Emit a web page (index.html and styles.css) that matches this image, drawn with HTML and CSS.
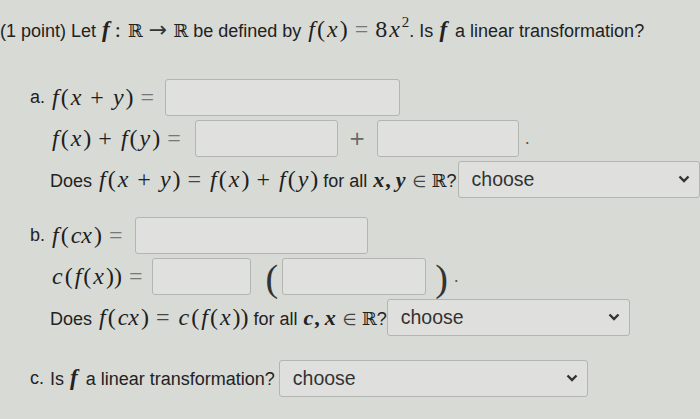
FILE: index.html
```html
<!DOCTYPE html>
<html>
<head>
<meta charset="utf-8">
<link rel="stylesheet" href="styles.css">
</head>
<body>
<div class="page">
  <div class="title">(1 point) Let <span class="fb">f</span><span class="colon">:</span><span class="bb">ℝ</span><span class="arrow">→</span><span class="bb">ℝ</span> be defined by <span class="math"><span class="v">f</span>(<span class="v">x</span>)<span class="rel">=</span>8<span class="v">x</span><sup class="sup">2</sup></span>. Is <span class="fb">f</span> a linear transformation?</div>

  <div class="row r-a1">
    <span class="lbl">a.</span>
    <span class="math"><span class="v">f</span>(<span class="v">x</span><span class="bin">+</span><span class="v">y</span>)<span class="rel">=</span></span>
    <span class="box w-a1"></span>
  </div>
  <div class="row r-a2">
    <span class="math"><span class="v">f</span>(<span class="v">x</span>)<span class="bin">+</span><span class="v">f</span>(<span class="v">y</span>)<span class="rel">=</span></span>
    <span class="box w-a2a"></span>
    <span class="plus">+</span>
    <span class="box w-a2b"></span>
    <span class="dot">.</span>
  </div>
  <div class="row r-a3">
    <span class="txt">Does <span class="math"><span class="v">f</span>(<span class="v">x</span><span class="bin">+</span><span class="v">y</span>)<span class="rel dk">=</span><span class="v">f</span>(<span class="v">x</span>)<span class="bin">+</span><span class="v">f</span>(<span class="v">y</span>)</span> for all <span class="sm"><span class="v">x</span>,<span class="v sp">y</span></span><span class="in">∈</span><span class="bb">ℝ</span>?</span>
    <span class="sel w-s1"><span class="choose">choose</span><svg class="chev" viewBox="0 0 12 8" width="12" height="8"><path d="M1.5 1.5 L6 6 L10.5 1.5" fill="none" stroke="#333" stroke-width="2.4"/></svg></span>
  </div>

  <div class="row r-b1">
    <span class="lbl">b.</span>
    <span class="math"><span class="v">f</span>(<span class="v">cx</span>)<span class="rel">=</span></span>
    <span class="box w-b1"></span>
  </div>
  <div class="row r-b2">
    <span class="math"><span class="v">c</span>(<span class="v">f</span>(<span class="v">x</span>))<span class="rel">=</span></span>
    <span class="box w-b2a"></span>
    <span class="paren pl">(</span>
    <span class="box w-b2b"></span>
    <span class="paren pr">)</span>
    <span class="dot">.</span>
  </div>
  <div class="row r-b3">
    <span class="txt">Does <span class="math"><span class="v">f</span>(<span class="v">cx</span>)<span class="rel dk">=</span><span class="v">c</span>(<span class="v">f</span>(<span class="v">x</span>))</span> for all <span class="sm"><span class="v">c</span>,<span class="v sp">x</span></span><span class="in">∈</span><span class="bb">ℝ</span>?</span>
    <span class="sel w-s2"><span class="choose">choose</span><svg class="chev" viewBox="0 0 12 8" width="12" height="8"><path d="M1.5 1.5 L6 6 L10.5 1.5" fill="none" stroke="#333" stroke-width="2.4"/></svg></span>
  </div>

  <div class="row r-c">
    <span class="lbl">c.</span>
    <span class="txt">Is <span class="fb">f</span> a linear transformation?</span>
    <span class="sel w-s3"><span class="choose">choose</span><svg class="chev" viewBox="0 0 12 8" width="12" height="8"><path d="M1.5 1.5 L6 6 L10.5 1.5" fill="none" stroke="#333" stroke-width="2.4"/></svg></span>
  </div>
</div>
</body>
</html>
```

FILE: styles.css
```css
html, body {
  margin: 0;
  padding: 0;
  background: #d8dad6;
  width: 700px;
  height: 419px;
  overflow: hidden;
}
.page {
  font-family: "Liberation Sans", Arial, sans-serif;
  font-size: 18px;
  color: #222;
  display: flex;
  flex-direction: column;
}
.title {
  margin-top: 16px;
  padding-left: 0;
  height: 26px;
  line-height: 26px;
  white-space: nowrap;
}
.math {
  font-family: "Liberation Serif", "Times New Roman", serif;
  font-size: 24px;
  color: #1e1e1e;
}
.v {
  font-style: italic;
  padding: 0 2px;
}
.rel {
  display: inline-block;
  margin: 0 7px;
  color: #777;
}
.rel.dk { color: #444; }
.bin {
  display: inline-block;
  margin: 0 7px;
}
.sup {
  font-size: 15px;
  vertical-align: 10px;
  line-height: 0;
}
.fb {
  font-family: "Liberation Serif", serif;
  font-style: italic;
  font-weight: bold;
  font-size: 23px;
  padding: 0 3px 0 1px;
}
.title .fb + .colon { margin-left: 2px; }
.colon {
  font-family: "Liberation Serif", serif;
  font-size: 22px;
  margin: 0 7px 0 4px;
}
.bb {
  font-family: "DejaVu Serif", serif;
  font-size: 18px;
}
.arrow {
  font-family: "DejaVu Sans", sans-serif;
  font-size: 22px;
  margin: 0 6px;
  color: #333;
}
.sm {
  font-family: "Liberation Serif", serif;
  font-size: 22px;
  font-weight: bold;
}
.sm .v { padding: 0 1px; }
.sm .sp { margin-left: 4px; }
.in {
  font-family: "DejaVu Sans", sans-serif;
  font-size: 16px;
  margin: 0 5px 0 6px;
  color: #444;
}
.row {
  display: flex;
  align-items: center;
  height: 38px;
  white-space: nowrap;
}
.lbl {
  width: 20px;
  padding-left: 30px;
}
.r-a2 .math, .r-b2 .math { margin-left: 50px; }
.r-a3 .txt, .r-b3 .txt { margin-left: 50px; }
.r-a1 { margin-top: 36px; }
.r-a2 { margin-top: 3px; }
.r-a3 { margin-top: 3px; }
.r-b1 { margin-top: 18px; }
.r-b2 { margin-top: 3px; }
.r-b3 { margin-top: 3px; }
.r-c { margin-top: 23px; }

.box {
  box-sizing: border-box;
  height: 37px;
  background: #e0e1de;
  border: 1px solid #b3b5b1;
  border-radius: 3px;
}
.w-a1 { width: 235px; margin-left: 4px; }
.w-a2a { width: 143px; margin-left: 7px; }
.plus {
  width: 39px;
  text-align: center;
  font-family: "DejaVu Sans", sans-serif;
  font-size: 20px;
  color: #666;
}
.w-a2b { width: 142px; }
.dot { margin-left: 6px; color: #555; }
.w-b1 { width: 233px; margin-left: 5px; }
.w-b2a { width: 99px; margin-left: 2px; }
.paren {
  font-family: "Liberation Serif", serif;
  font-size: 38px;
  line-height: 38px;
  color: #333;
}
.paren.pl { margin: 4px 4px 0 15px; }
.paren.pr { margin: 4px 0 0 9px; }
.w-b2b { width: 144px; }

.sel {
  box-sizing: border-box;
  height: 37px;
  display: flex;
  align-items: center;
  justify-content: space-between;
  background: #dfe0dd;
  border: 1px solid #b3b5b1;
  border-radius: 3px;
  padding: 0 9px 0 13px;
  font-size: 19.5px;
  color: #333;
}
.w-s1 { width: 244px; margin-left: 1px; }
.w-s2 { width: 243px; margin-left: 0; }
.w-s3 { width: 309px; margin-left: 4px; }
.chev { flex: none; }
```
